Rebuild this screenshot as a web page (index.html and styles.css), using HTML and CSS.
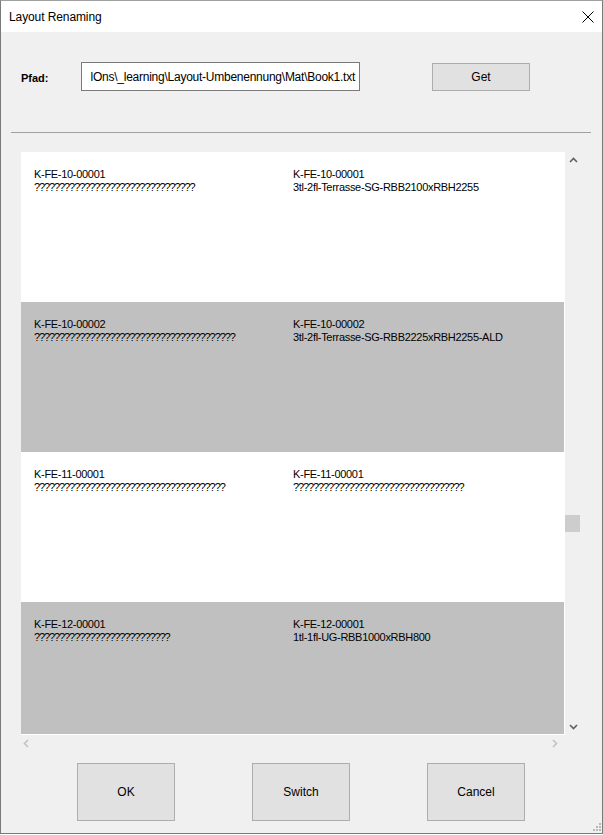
FILE: index.html
```html
<!DOCTYPE html>
<html>
<head>
<meta charset="utf-8">
<link rel="stylesheet" href="styles.css">
</head>
<body>
<div class="window">
  <div class="titlebar">
    <span class="title">Layout Renaming</span>
    <svg class="close" width="12" height="12" viewBox="0 0 12 12"><path d="M0.5 0.5 L11.5 11.5 M11.5 0.5 L0.5 11.5" stroke="#000" stroke-width="1" fill="none"/></svg>
  </div>
  <div class="client">
    <div class="path-row">
      <span class="label">Pfad:</span>
      <div class="field"><span class="field-text">lOns\_learning\Layout-Umbenennung\Mat\Book1.txt</span></div>
      <div class="btn btn-get">Get</div>
    </div>
    <div class="sep"></div>
    <div class="list-area">
      <div class="list-main">
        <div class="list">
          <div class="row">
            <div class="cell"><div>K-FE-10-00001</div><div class="q">????????????????????????????????</div></div>
            <div class="cell"><div>K-FE-10-00001</div><div>3tl-2fl-Terrasse-SG-RBB2100xRBH2255</div></div>
          </div>
          <div class="row alt">
            <div class="cell"><div>K-FE-10-00002</div><div class="q">????????????????????????????????????????</div></div>
            <div class="cell"><div>K-FE-10-00002</div><div>3tl-2fl-Terrasse-SG-RBB2225xRBH2255-ALD</div></div>
          </div>
          <div class="row">
            <div class="cell"><div>K-FE-11-00001</div><div class="q">??????????????????????????????????????</div></div>
            <div class="cell"><div>K-FE-11-00001</div><div class="q">??????????????????????????????????</div></div>
          </div>
          <div class="row alt">
            <div class="cell"><div>K-FE-12-00001</div><div class="q">???????????????????????????</div></div>
            <div class="cell"><div>K-FE-12-00001</div><div>1tl-1fl-UG-RBB1000xRBH800</div></div>
          </div>
        </div>
        <div class="vscroll">
          <svg class="arrow" width="9" height="6" viewBox="0 0 9 6"><path d="M1 5 L4.5 1.5 L8 5" stroke="#606060" stroke-width="1.6" fill="none"/></svg>
          <div class="track"><div class="thumb"></div></div>
          <svg class="arrow" width="9" height="6" viewBox="0 0 9 6"><path d="M1 1 L4.5 4.5 L8 1" stroke="#606060" stroke-width="1.6" fill="none"/></svg>
        </div>
      </div>
      <div class="hscroll">
        <svg width="6" height="9" viewBox="0 0 6 9"><path d="M5 1 L1.5 4.5 L5 8" stroke="#c2c2c2" stroke-width="1.6" fill="none"/></svg>
        <svg width="6" height="9" viewBox="0 0 6 9"><path d="M1 1 L4.5 4.5 L1 8" stroke="#c2c2c2" stroke-width="1.6" fill="none"/></svg>
      </div>
    </div>
    <div class="buttons">
      <div class="btn btn-big">OK</div>
      <div class="btn btn-big">Switch</div>
      <div class="btn btn-big">Cancel</div>
    </div>
    <svg class="grip" width="9" height="9" viewBox="0 0 9 9">
      <rect x="7" y="1" width="2" height="2" fill="#b8b8b8"/>
      <rect x="4" y="4" width="2" height="2" fill="#b8b8b8"/>
      <rect x="7" y="4" width="2" height="2" fill="#b8b8b8"/>
      <rect x="1" y="7" width="2" height="2" fill="#b8b8b8"/>
      <rect x="4" y="7" width="2" height="2" fill="#b8b8b8"/>
      <rect x="7" y="7" width="2" height="2" fill="#b8b8b8"/>
    </svg>
  </div>
</div>
</body>
</html>
```
FILE: styles.css
```css
html, body {
  margin: 0;
  padding: 0;
  background: #ffffff;
}
body {
  font-family: "Liberation Sans", Arial, sans-serif;
  font-size: 12px;
  color: #000;
}
.window {
  width: 603px;
  height: 834px;
  box-sizing: border-box;
  border: 1px solid #7a7a7a;
  border-top-color: #a0a0a0;
  display: flex;
  flex-direction: column;
  background: #f0f0f0;
}
.titlebar {
  height: 31px;
  background: #ffffff;
  display: flex;
  align-items: center;
  justify-content: space-between;
  padding: 0 8px 0 8px;
  flex-shrink: 0;
}
.title {
  font-size: 12px;
  letter-spacing: -0.1px;
  margin-top: 1px;
}
.close {
  margin-right: 0;
  margin-top: 1px;
}
.client {
  flex: 1;
  display: flex;
  flex-direction: column;
  position: relative;
}
.path-row {
  display: flex;
  align-items: center;
  padding: 30px 0 0 20px;
  height: 29px;
}
.label {
  font-weight: bold;
  font-size: 11px;
  width: 60px;
  margin-top: 3px;
}
.field {
  width: 272px;
  height: 27px;
  border: 1px solid #7a7a7a;
  background: #fff;
  display: flex;
  align-items: center;
  justify-content: flex-end;
  overflow: hidden;
  padding-right: 4px;
  padding-left: 1px;
  box-sizing: content-box;
  white-space: nowrap;
}
.field-text {
  font-size: 12px;
  letter-spacing: -0.25px;
  flex-shrink: 0;
}
.btn {
  background: #e1e1e1;
  border: 1px solid #adadad;
  box-sizing: border-box;
  display: flex;
  align-items: center;
  justify-content: center;
  font-size: 12px;
}
.btn-get {
  width: 98px;
  height: 28px;
  margin-left: 72px;
  margin-top: 0;
}
.sep {
  height: 1px;
  background: #a0a0a0;
  margin: 41px 11px 0 10px;
}
.list-area {
  margin: 19px 0 0 20px;
  display: flex;
  flex-direction: column;
}
.list-main {
  display: flex;
  height: 583px;
}
.list {
  width: 544px;
  height: 583px;
  box-sizing: border-box;
  border-right: 1px solid #fff;
  border-bottom: 1px solid #fff;
  overflow: hidden;
}
.row {
  height: 150px;
  background: #ffffff;
  display: grid;
  grid-template-columns: 259px 1fr;
  padding: 16px 0 0 13px;
  box-sizing: border-box;
  font-size: 11px;
  line-height: 13px;
  letter-spacing: -0.3px;
}
.row.alt {
  background: #c0c0c0;
}
.cell {
  white-space: nowrap;
}
.q {
  font-size: 11px;
  letter-spacing: -1.1px;
}
.vscroll {
  width: 17px;
  display: flex;
  flex-direction: column;
  align-items: center;
  padding: 5px 0 5px 0;
  box-sizing: border-box;
}
.vscroll .arrow {
  flex-shrink: 0;
}
.track {
  flex: 1;
  width: 17px;
  position: relative;
}
.thumb {
  position: absolute;
  left: 0;
  width: 15px;
  top: 352px;
  height: 17px;
  background: #cdcdcd;
}
.hscroll {
  width: 544px;
  height: 17px;
  display: flex;
  align-items: center;
  justify-content: space-between;
  padding: 0 7px 0 2px;
  box-sizing: border-box;
}
.buttons {
  display: flex;
  gap: 77px;
  padding: 11px 0 0 76px;
}
.btn-big {
  width: 98px;
  height: 58px;
}
.grip {
  position: absolute;
  right: 1px;
  bottom: 2px;
}
```
